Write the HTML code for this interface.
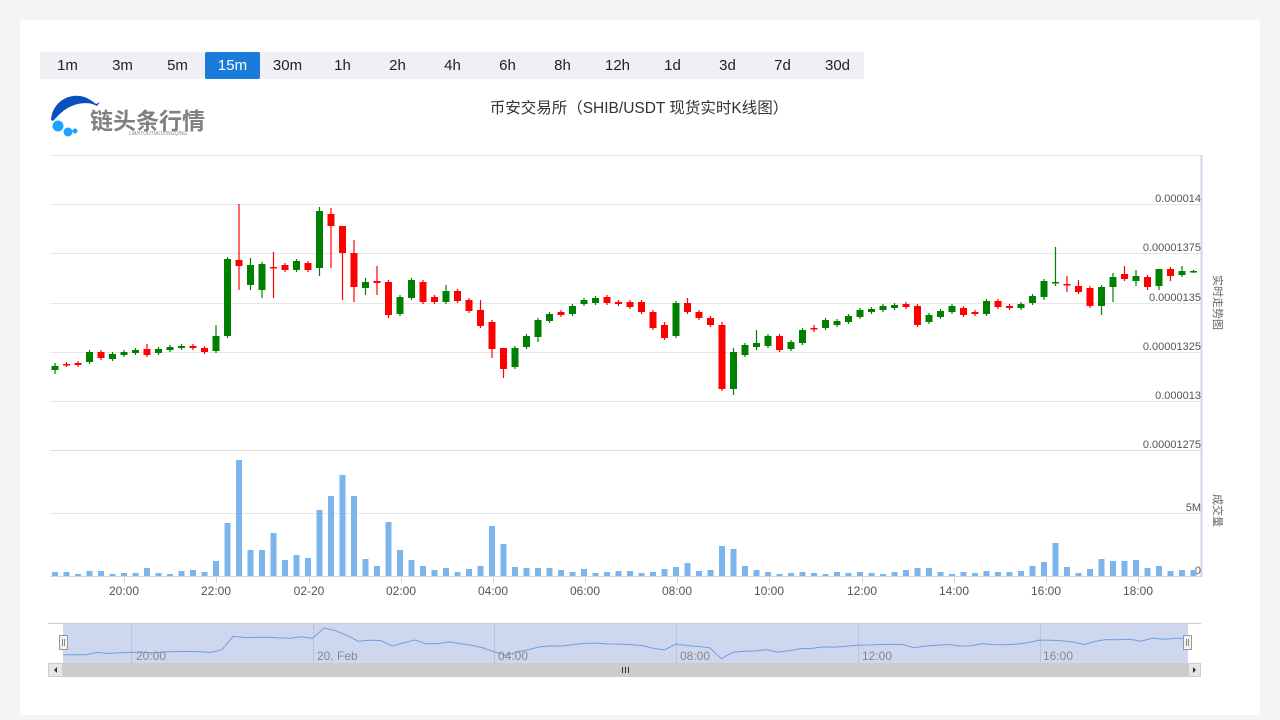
<!DOCTYPE html>
<html><head><meta charset="utf-8"><style>
body{margin:0;background:#f4f4f4;font-family:"Liberation Sans","Noto Sans CJK SC",sans-serif;}
#p{position:absolute;left:20px;top:20px;width:1240px;height:695px;background:#fff;}
.tabs{position:absolute;left:40px;top:52px;width:824px;height:27px;background:#eef0f3;}
.tabs span{position:absolute;top:0;width:55px;height:27px;line-height:27px;text-align:center;font-size:15px;color:#222;}
.tabs span.a{background:#1a7bdb;color:#fff;border-radius:2px;}
svg text{font-family:"Liberation Sans","Noto Sans CJK SC",sans-serif;}
</style></head><body>
<div id="p"></div>
<div class="tabs">
<span style="left:0">1m</span><span style="left:55px">3m</span><span style="left:110px">5m</span><span class="a" style="left:165px">15m</span><span style="left:220px">30m</span><span style="left:275px">1h</span><span style="left:330px">2h</span><span style="left:385px">4h</span><span style="left:440px">6h</span><span style="left:495px">8h</span><span style="left:550px">12h</span><span style="left:605px">1d</span><span style="left:660px">3d</span><span style="left:715px">7d</span><span style="left:770px">30d</span>
</div>
<svg id="s" width="1280" height="720" style="position:absolute;left:0;top:0">
<!-- logo -->
<path d="M51 120 C52 104 66 94 80 96 C87 97 92 101 96 104 L100 102 L97 106 C88 101 76 103 66 109 C60 113 56 118 53 121 Z" fill="#0a4fbf"/>
<circle cx="58" cy="126" r="5.5" fill="#1aa3ff"/><circle cx="68" cy="132" r="4.5" fill="#1aa3ff"/><circle cx="75" cy="131" r="2.5" fill="#1aa3ff"/>
<text x="90" y="129" font-size="23" font-weight="bold" fill="#808080">链头条行情</text>
<text x="129" y="135" font-size="5" font-style="italic" fill="#888">LIANTOUTIAOXINGQING</text>
<text x="639" y="113" font-size="15.5" fill="#333" text-anchor="middle">币安交易所（SHIB/USDT 现货实时K线图）</text>
<g stroke="#e6e6e6" stroke-width="1">
<line x1="50" y1="155.5" x2="1201" y2="155.5"/>
<line x1="50" y1="204.5" x2="1201" y2="204.5"/><line x1="50" y1="253.5" x2="1201" y2="253.5"/><line x1="50" y1="303.5" x2="1201" y2="303.5"/><line x1="50" y1="352.5" x2="1201" y2="352.5"/><line x1="50" y1="401.5" x2="1201" y2="401.5"/><line x1="50" y1="450.5" x2="1201" y2="450.5" stroke="#ddd"/><line x1="50" y1="513.5" x2="1201" y2="513.5"/>
</g>
<line x1="50" y1="576.5" x2="1201" y2="576.5" stroke="#ccd6eb"/>
<line x1="1201.5" y1="155" x2="1201.5" y2="577" stroke="#ccd6eb" stroke-width="2"/>
<g font-size="11" fill="#555" text-anchor="end">
<text x="1201" y="202">0.000014</text><text x="1201" y="251">0.00001375</text><text x="1201" y="301">0.0000135</text><text x="1201" y="350">0.00001325</text><text x="1201" y="399">0.000013</text><text x="1201" y="448">0.00001275</text><text x="1201" y="511">5M</text><text x="1201" y="574">0</text>
</g>
<g font-size="11" fill="#666"><text transform="translate(1214,275) rotate(90)">实时走势图</text><text transform="translate(1214,494) rotate(90)">成交量</text></g>
<g id="c"></g>
<g stroke="#ccd6eb"><line x1="124.5" y1="577" x2="124.5" y2="583"/><line x1="216.5" y1="577" x2="216.5" y2="583"/><line x1="309.5" y1="577" x2="309.5" y2="583"/><line x1="401.5" y1="577" x2="401.5" y2="583"/><line x1="493.5" y1="577" x2="493.5" y2="583"/><line x1="585.5" y1="577" x2="585.5" y2="583"/><line x1="677.5" y1="577" x2="677.5" y2="583"/><line x1="769.5" y1="577" x2="769.5" y2="583"/><line x1="862.5" y1="577" x2="862.5" y2="583"/><line x1="954.5" y1="577" x2="954.5" y2="583"/><line x1="1046.5" y1="577" x2="1046.5" y2="583"/><line x1="1138.5" y1="577" x2="1138.5" y2="583"/></g>
<g font-size="12" fill="#555" text-anchor="middle">
<text x="124" y="595">20:00</text><text x="216" y="595">22:00</text><text x="309" y="595">02-20</text><text x="401" y="595">02:00</text><text x="493" y="595">04:00</text><text x="585" y="595">06:00</text><text x="677" y="595">08:00</text><text x="769" y="595">10:00</text><text x="862" y="595">12:00</text><text x="954" y="595">14:00</text><text x="1046" y="595">16:00</text><text x="1138" y="595">18:00</text>
</g>
<!-- navigator -->
<line x1="48" y1="623.5" x2="1201" y2="623.5" stroke="#ccc"/>
<rect x="63" y="624" width="1125" height="39" fill="#cdd8ee"/>
<g stroke="#b8c4da"><line x1="131.5" y1="624" x2="131.5" y2="663"/><line x1="313.5" y1="624" x2="313.5" y2="663"/><line x1="494.5" y1="624" x2="494.5" y2="663"/><line x1="676.5" y1="624" x2="676.5" y2="663"/><line x1="858.5" y1="624" x2="858.5" y2="663"/><line x1="1040.5" y1="624" x2="1040.5" y2="663"/></g>
<path id="nl" fill="none" stroke="#6f9fe0" stroke-width="1"/>
<g font-size="12" fill="#888"><text x="136" y="660">20:00</text><text x="317" y="660">20. Feb</text><text x="498" y="660">04:00</text><text x="680" y="660">08:00</text><text x="862" y="660">12:00</text><text x="1043" y="660">16:00</text></g>
<rect x="59.5" y="635.5" width="8" height="14" fill="#f2f2f2" stroke="#999"/><line x1="62.5" y1="639" x2="62.5" y2="646" stroke="#888"/><line x1="64.5" y1="639" x2="64.5" y2="646" stroke="#888"/>
<rect x="1183.5" y="635.5" width="8" height="14" fill="#f2f2f2" stroke="#999"/><line x1="1186.5" y1="639" x2="1186.5" y2="646" stroke="#888"/><line x1="1188.5" y1="639" x2="1188.5" y2="646" stroke="#888"/>
<rect x="48" y="663" width="1153" height="14" fill="#ccc"/>
<rect x="48.5" y="663.5" width="14" height="13" fill="#e6e6e6" stroke="#ccc"/><rect x="1188.5" y="663.5" width="12" height="13" fill="#e6e6e6" stroke="#ccc"/>
<path d="M57 667 L54 670 L57 673Z" fill="#333"/><path d="M1193 667 L1196 670 L1193 673Z" fill="#333"/>
<g stroke="#333"><line x1="622.5" y1="667" x2="622.5" y2="673"/><line x1="625.5" y1="667" x2="625.5" y2="673"/><line x1="628.5" y1="667" x2="628.5" y2="673"/></g>
</svg>
<script>
var d=[[366,370,'g',363,374],[364,365,'r'],[363,365,'r'],[352,362,'g'],[352,358,'r'],[354,359,'g'],[352,355,'g'],[350,353,'g'],[349,355,'r',344],[349,353,'g'],[347,350,'g'],[346,348,'g'],[346,348,'r'],[348,352,'r'],[336,351,'g',325],[259,336,'g'],[260,266,'r',204,290],[265,285,'g',258,290],[264,290,'g',262,298],[267,268,'r',252,298],[265,270,'r'],[261,270,'g'],[263,270,'r'],[211,268,'g',207,276],[214,226,'r',208,268],[226,253,'r',226,300],[253,287,'r',240,302],[282,288,'g',278,295],[281,283,'r',266,295],[282,315,'r',280,318],[297,314,'g'],[280,298,'g'],[282,302,'r'],[297,302,'r'],[291,302,'g',285],[291,301,'r'],[300,311,'r'],[310,326,'r',300],[322,349,'r',320,358],[348,369,'r',348,378],[348,367,'g'],[336,347,'g'],[320,337,'g',318,342],[314,321,'g'],[312,315,'r'],[306,314,'g'],[300,304,'g'],[298,303,'g'],[297,303,'r'],[302,304,'r'],[302,307,'r'],[302,312,'r'],[312,328,'r'],[325,338,'r',322,340],[303,336,'g'],[303,312,'r',298],[312,318,'r'],[318,325,'r'],[325,389,'r',322,391],[352,389,'g',348,395],[345,355,'g'],[343,347,'g',330,350],[336,346,'g'],[336,350,'r'],[342,349,'g'],[330,343,'g'],[328,329,'r',325,332],[320,328,'g'],[321,325,'g'],[316,322,'g'],[310,317,'g'],[309,312,'g'],[306,310,'g'],[305,308,'g'],[304,307,'r'],[306,325,'r',304,327],[315,322,'g'],[311,317,'g'],[306,312,'g'],[308,315,'r'],[312,314,'r'],[301,314,'g'],[301,307,'r'],[306,308,'r'],[304,308,'g'],[296,303,'g'],[281,297,'g',279,300],[282,283,'g',247,286],[284,285,'r',276,292],[286,292,'r',280,294],[288,306,'r'],[287,306,'g',285,315],[277,287,'g',273,302],[274,279,'r',266,281],[276,281,'g',270,286],[277,287,'r',275,290],[269,286,'g',269,290],[269,276,'r',267,281],[271,275,'g',266,277],[271,272,'g',270,273]];
var v=[572,572,574,571,571,574,573,573,568,573,574,571,570,572,561,523,460,550,550,533,560,555,558,510,496,475,496,559,566,522,550,560,566,570,568,572,569,566,526,544,567,568,568,568,570,572,569,573,572,571,571,573,572,569,567,563,571,570,546,549,566,570,572,574,573,572,573,574,572,573,572,573,574,572,570,568,568,572,574,572,573,571,572,572,571,566,562,543,567,573,569,559,561,561,560,568,566,571,570,570];
var h='',pts=[];
for(var i=0;i<d.length;i++){var x=55+11.5*i,c=d[i],col=c[2]=='g'?'#008000':'#ff0000',t=c[3]||c[0]-2,b=c[4]||c[1]+2;
h+='<line x1="'+x+'" y1="'+t+'" x2="'+x+'" y2="'+b+'" stroke="'+col+'" stroke-width="1.2"/>';
h+='<rect x="'+(x-3.5)+'" y="'+c[0]+'" width="7" height="'+Math.max(1.5,c[1]-c[0])+'" fill="'+col+'"/>';
h+='<rect x="'+(x-3)+'" y="'+v[i]+'" width="6" height="'+(576-v[i])+'" fill="#7cb5ec"/>';
var cl=c[2]=='g'?c[0]:c[1];pts.push((63+(x-55)*1125/1140).toFixed(1)+','+(627+(cl-205)/185*32).toFixed(1));}
document.getElementById('c').innerHTML=h;
document.getElementById('nl').setAttribute('d','M'+pts.join(' L'));
</script>
</body></html>
